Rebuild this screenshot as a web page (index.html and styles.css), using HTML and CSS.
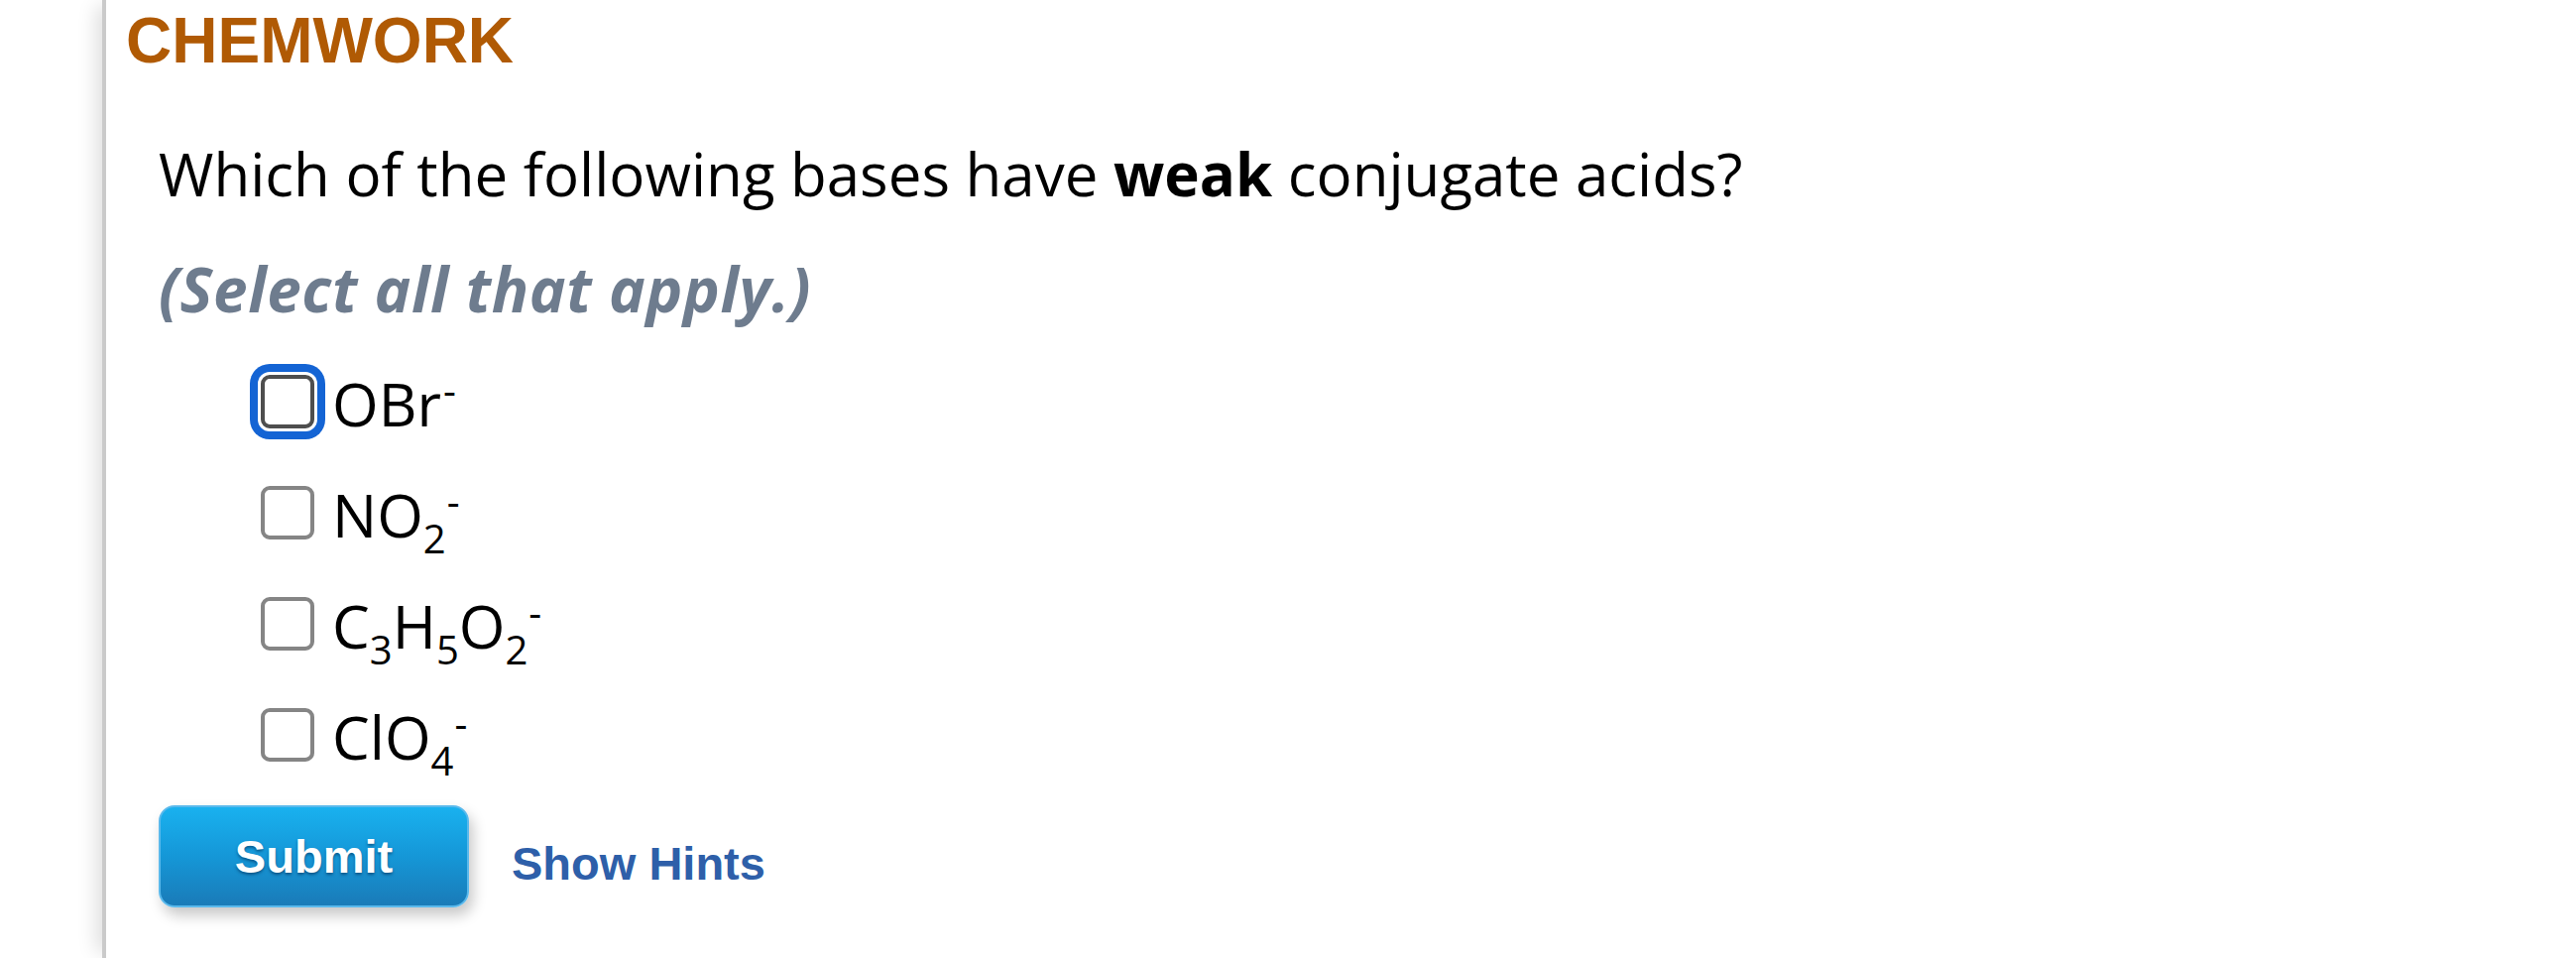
FILE: index.html
```html
<!DOCTYPE html>
<html lang="en">
<head>
<meta charset="utf-8">
<title>CHEMWORK</title>
<link rel="stylesheet" href="styles.css">
</head>
<body>
<div class="panel">
  <header class="header">
    <h1 class="brand">CHEMWORK</h1>
  </header>
  <main class="content">
    <p class="question">Which of the following bases have <b>weak</b> conjugate acids?</p>
    <p class="hint">(Select all that apply.)</p>
    <div class="options">
      <label class="option"><span class="box focused"></span>OBr<sup class="sup">-</sup></label>
      <label class="option"><span class="box"></span>NO<sub class="sub">2</sub><sup class="sup sup-after">-</sup></label>
      <label class="option"><span class="box"></span>C<sub class="sub">3</sub>H<sub class="sub">5</sub>O<sub class="sub">2</sub><sup class="sup sup-after">-</sup></label>
      <label class="option"><span class="box"></span>ClO<sub class="sub">4</sub><sup class="sup sup-after">-</sup></label>
    </div>
    <div class="actions">
      <button class="submit" type="button">Submit</button>
      <a class="hints" href="#">Show Hints</a>
    </div>
  </main>
</div>
</body>
</html>
```

FILE: styles.css
```css
html, body {
  margin: 0;
  padding: 0;
  background: #ffffff;
}

body {
  min-height: 966px;
}

.panel {
  margin-left: 103px;
  min-height: 966px;
  border-left: 4px solid #cacaca;
  box-shadow: -12px 0 18px -6px rgba(0, 0, 0, 0.13);
  background: #ffffff;
  box-sizing: border-box;
}

.header {
  padding-left: 20px;
  padding-top: 9px;
}

.brand {
  margin: 0;
  font-family: "Liberation Sans", Arial, sans-serif;
  font-weight: bold;
  font-size: 64px;
  line-height: 64px;
  color: #b05a04;
}

.content {
  padding-left: 53px;
}

.question {
  margin: 61px 0 0;
  font-family: "Open Sans", sans-serif;
  font-size: 60px;
  line-height: 82px;
  color: #000000;
}

.question b {
  font-weight: 700;
}

.hint {
  margin: 36px 0 0;
  font-family: "Open Sans", sans-serif;
  font-style: italic;
  font-weight: 700;
  font-size: 62px;
  line-height: 78px;
  letter-spacing: 0.6px;
  color: #6e7c8e;
}

.options {
  margin-top: 21px;
  padding-left: 103px;
}

.option {
  display: block;
  font-family: "Open Sans", sans-serif;
  font-size: 60px;
  line-height: 112px;
  height: 112px;
  color: #000000;
}

.box {
  display: inline-block;
  width: 54px;
  height: 54px;
  box-sizing: border-box;
  border: 4px solid #858585;
  border-radius: 9px;
  background: #ffffff;
  vertical-align: -2px;
  margin-right: 18px;
}

.box.focused {
  border-color: #4e4e4e;
  box-shadow: 0 0 0 3px #ffffff, 0 0 0 11px #1464d4;
}

.sub {
  font-size: 40px;
  line-height: 0;
  vertical-align: -16px;
}

.sup {
  font-size: 40px;
  line-height: 0;
  vertical-align: 22px;
  margin-left: 2px;
}

.sup-after {
  margin-left: 1px;
}

.actions {
  margin-top: 13px;
  display: flex;
  align-items: flex-start;
}

.submit {
  width: 313px;
  height: 103px;
  box-sizing: border-box;
  border: 2px solid #5ab9ec;
  border-radius: 16px;
  background: linear-gradient(to bottom, #19b1ef 0%, #1597d7 50%, #1a7bb8 100%);
  box-shadow: 4px 8px 14px rgba(0, 0, 0, 0.22);
  color: #ffffff;
  font-family: "Liberation Sans", Arial, sans-serif;
  font-weight: bold;
  font-size: 47px;
  line-height: 1;
  text-shadow: 0 2px 3px rgba(0, 40, 80, 0.55);
  padding: 0;
  margin: 0;
}

.hints {
  margin-left: 43px;
  margin-top: 35px;
  font-family: "Liberation Sans", Arial, sans-serif;
  font-weight: bold;
  font-size: 47px;
  line-height: 47px;
  color: #2e5fa9;
  text-decoration: none;
}
```
